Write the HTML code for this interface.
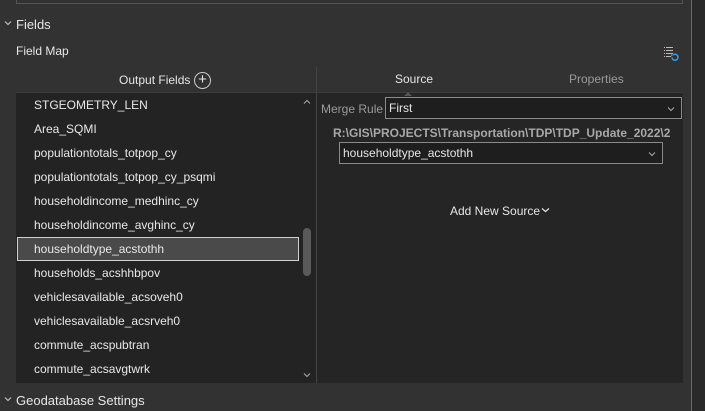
<!DOCTYPE html><html><head><style>
*{margin:0;padding:0;box-sizing:border-box}
body{width:705px;height:411px;background:#323232;position:relative;overflow:hidden;font-family:"Liberation Sans",sans-serif;color:#e6e6e6;font-size:12px}
.a{position:absolute;white-space:nowrap}
.row{position:absolute;left:17px;width:282px;height:24px;line-height:25px;padding-left:17px;color:#e8e8e8}
.dn{position:absolute}
</style></head><body>
<div class="a" style="left:691px;top:0;width:1px;height:411px;background:#6a6a6a"></div>
<div class="a" style="left:692px;top:0;width:13px;height:411px;background:#2a2a2a"></div>
<div class="a" style="left:16px;top:-2px;width:667px;height:6px;border:1px solid #555;border-top:none"></div>
<svg class="a" style="left:4px;top:20px" width="8" height="6"><path d="M1 1.5l3 3 3-3" fill="none" stroke="#bbb" stroke-width="1.2"/></svg>
<div class="a" style="left:16px;top:17px;font-size:13px">Fields</div>
<div class="a" style="left:16px;top:44px;font-size:12px">Field Map</div>
<svg class="a" style="left:663px;top:46px" width="18" height="18" viewBox="0 0 18 18"><g stroke="#bbb" stroke-width="1"><path d="M1 1.5h1M3 1.5h7M1 4.5h1M3 4.5h7M1 7.5h1M3 7.5h7M1 10.5h1M3 10.5h5"/></g><path d="M9 11.5a3 3 0 1 0 1-2.5" fill="none" stroke="#3a9ae0" stroke-width="1.5"/><path d="M8 8l2 1.5-2 1z" fill="#3a9ae0"/></svg>
<div class="a" style="left:119px;top:73px">Output Fields</div>
<div class="a" style="left:194px;top:72px;width:17px;height:17px;border:1px solid #ccc;border-radius:50%;text-align:center;line-height:14px;font-size:15px">+</div>
<div class="a" style="left:316px;top:67px;width:1px;height:316px;background:#444"></div>
<div class="a" style="left:16px;top:92px;width:300px;height:291px;background:#232323"></div>
<div class="a" style="left:16px;top:92px;width:667px;height:1px;background:#3c3c3c"></div>
<div class="a" style="left:303px;top:228px;width:8px;height:48px;background:#5a5a5a;border-radius:4px"></div>
<svg class="a" style="left:303px;top:99px" width="8" height="6"><path d="M1 4.5l3-3 3 3" fill="none" stroke="#aaa" stroke-width="1"/></svg>
<svg class="a" style="left:303px;top:372px" width="8" height="6"><path d="M1 1.5l3 3 3-3" fill="none" stroke="#aaa" stroke-width="1"/></svg>
<div class="row" style="top:93px">STGEOMETRY_LEN</div>
<div class="row" style="top:117px">Area_SQMI</div>
<div class="row" style="top:141px">populationtotals_totpop_cy</div>
<div class="row" style="top:165px">populationtotals_totpop_cy_psqmi</div>
<div class="row" style="top:189px">householdincome_medhinc_cy</div>
<div class="row" style="top:213px">householdincome_avghinc_cy</div>
<div class="row" style="top:237px;background:#4a4a4a;border:1px solid #d0d0d0;padding-left:16px;line-height:23px">householdtype_acstothh</div>
<div class="row" style="top:261px">households_acshhbpov</div>
<div class="row" style="top:285px">vehiclesavailable_acsoveh0</div>
<div class="row" style="top:309px">vehiclesavailable_acsrveh0</div>
<div class="row" style="top:333px">commute_acspubtran</div>
<div class="row" style="top:357px">commute_acsavgtwrk</div>
<div class="a" style="left:317px;top:93px;width:366px;height:290px;background:#252525"></div>
<div class="a" style="left:395px;top:72px">Source</div>
<div class="a" style="left:404px;top:88px;width:0;height:0;border:4px solid transparent;border-bottom-color:#555"></div>
<div class="a" style="left:569px;top:72px;color:#9a9a9a">Properties</div>
<div class="a" style="left:321px;top:102px;color:#9a9a9a">Merge Rule</div>
<div class="a" style="left:385px;top:97px;width:297px;height:22px;border:1px solid #8a8a8a;background:#1e1e1e;padding-left:3px;line-height:21px">First<svg class="dn" style="right:6px;top:8px" width="8" height="6"><path d="M1 1.5l3 3 3-3" fill="none" stroke="#aaa" stroke-width="1"/></svg></div>
<div class="a" style="left:333px;top:126px;color:#a8a8a8;font-weight:bold">R:\GIS\PROJECTS\Transportation\TDP\TDP_Update_2022\2</div>
<div class="a" style="left:339px;top:142px;width:324px;height:22px;border:1px solid #8a8a8a;background:#1e1e1e;padding-left:3px;line-height:21px">householdtype_acstothh<svg class="dn" style="right:6px;top:8px" width="8" height="6"><path d="M1 1.5l3 3 3-3" fill="none" stroke="#aaa" stroke-width="1"/></svg></div>
<div class="a" style="left:450px;top:204px">Add New Source</div>
<svg class="a" style="left:541px;top:207px" width="9" height="6"><path d="M1 1.5l3.5 3 3.5-3" fill="none" stroke="#ddd" stroke-width="1.3"/></svg>
<svg class="a" style="left:4px;top:396px" width="8" height="6"><path d="M1 1.5l3 3 3-3" fill="none" stroke="#bbb" stroke-width="1.2"/></svg>
<div class="a" style="left:16px;top:393px;font-size:13px">Geodatabase Settings</div>
</body></html>
